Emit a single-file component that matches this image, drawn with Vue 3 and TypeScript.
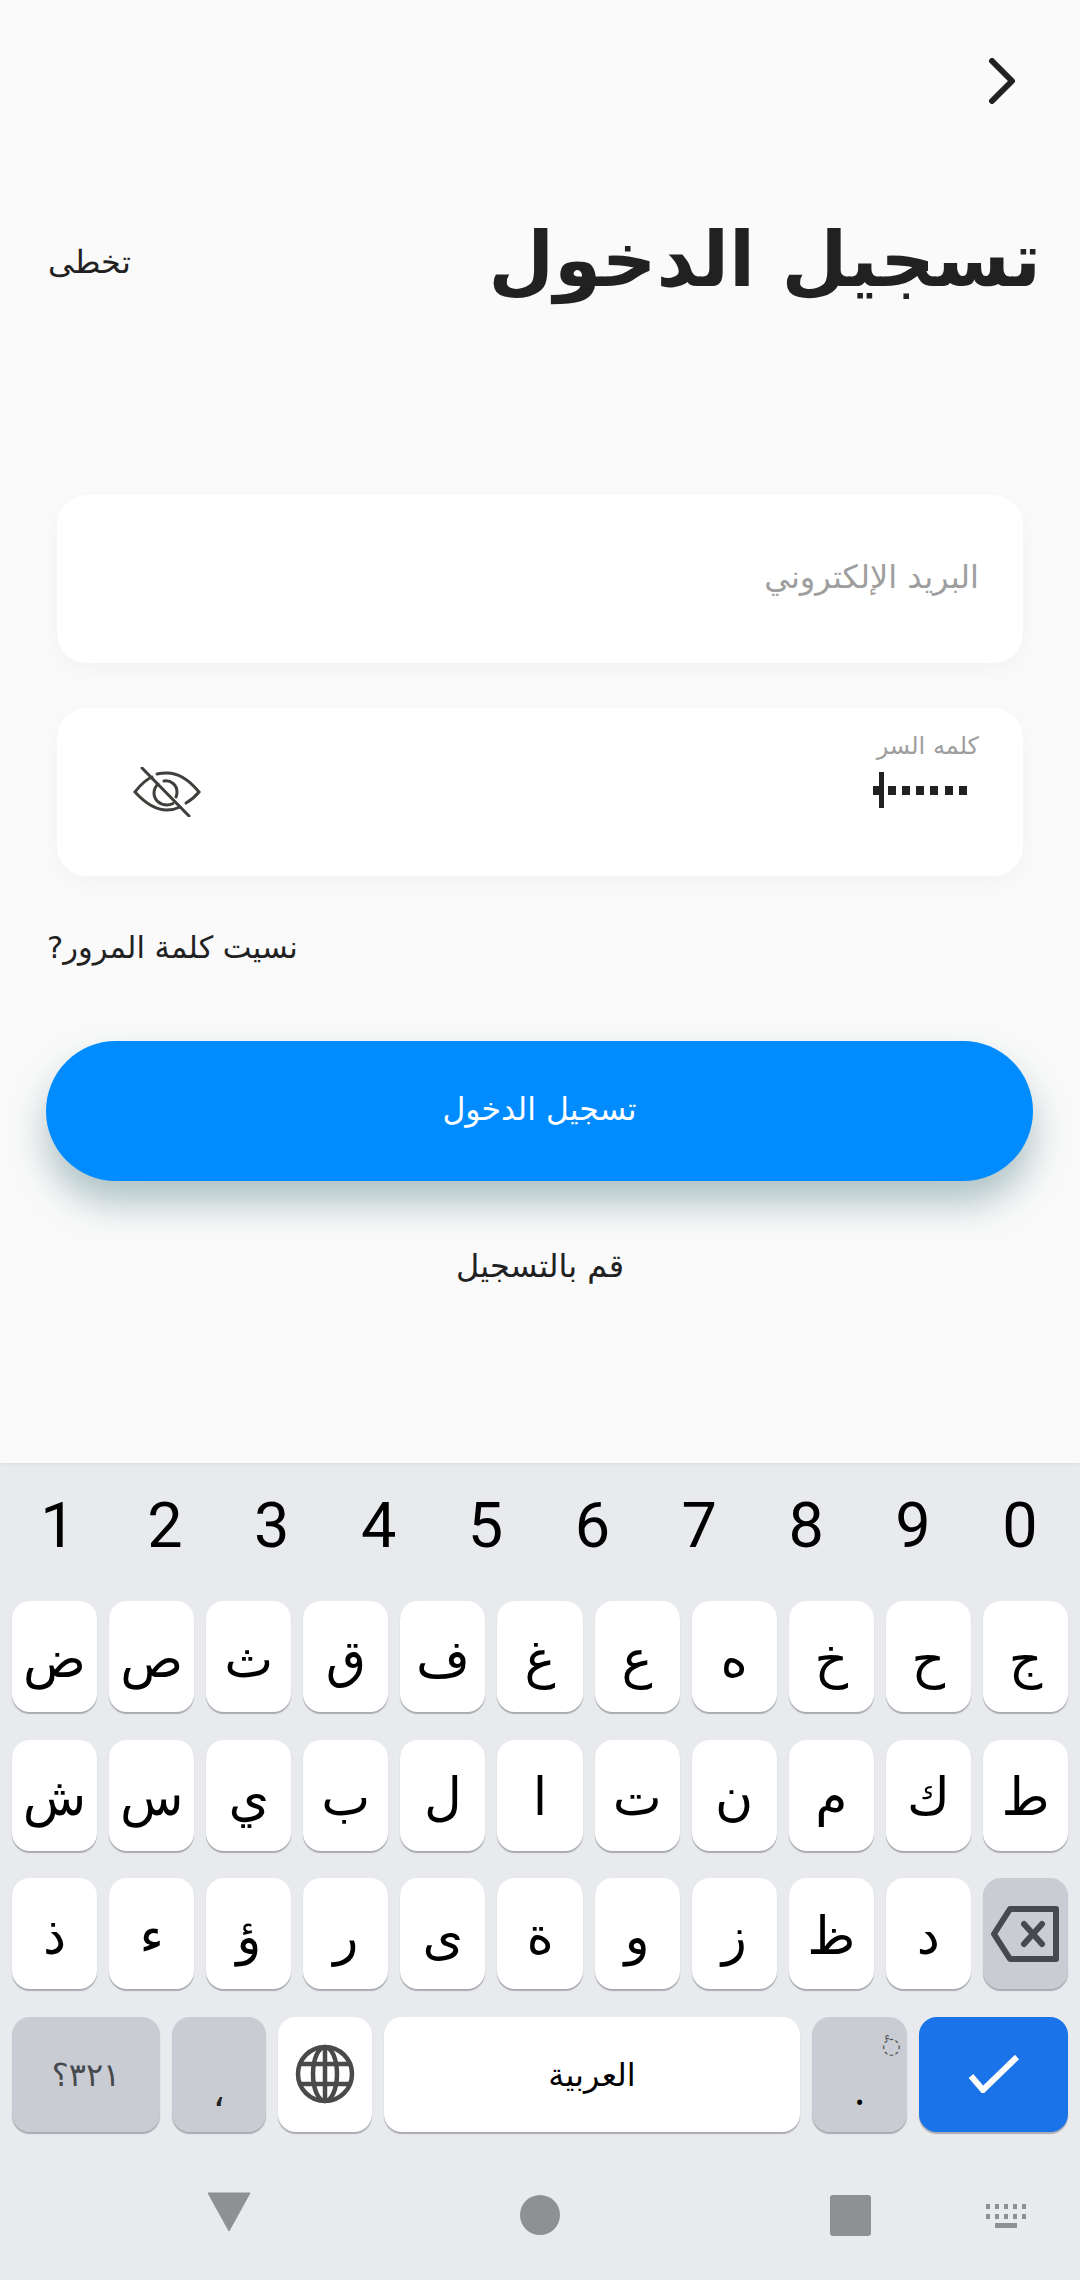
<script setup lang="ts">
const digits: string[] = ['1', '2', '3', '4', '5', '6', '7', '8', '9', '0']
const row1: string[] = ['ض', 'ص', 'ث', 'ق', 'ف', 'غ', 'ع', 'ه', 'خ', 'ح', 'ج']
const row2: string[] = ['ش', 'س', 'ي', 'ب', 'ل', 'ا', 'ت', 'ن', 'م', 'ك', 'ط']
const row3: string[] = ['ذ', 'ء', 'ؤ', 'ر', 'ى', 'ة', 'و', 'ز', 'ظ', 'د']
const dots: number[] = [1, 2, 3, 4, 5, 6, 7]
</script>

<template>
  <div class="screen">
    <main class="form">
      <div class="topbar">
        <svg class="chevron" width="28" height="46" viewBox="0 0 28 46" fill="none">
          <path d="M4 3 L24 23 L4 43" stroke="#212121" stroke-width="6" stroke-linecap="round" stroke-linejoin="round" />
        </svg>
      </div>
      <div class="heading">
        <span class="skip" dir="rtl">تخطى</span>
        <h1 class="title" dir="rtl">تسجيل الدخول</h1>
      </div>
      <div class="field" dir="rtl">
        <span class="placeholder">البريد الإلكتروني</span>
      </div>
      <div class="field password" dir="rtl">
        <div class="pw-text">
          <span class="pw-label">كلمه السر</span>
          <div class="pw-dots" dir="ltr">
            <span class="caret"></span>
            <span v-for="d in dots" :key="d" class="dot"></span>
          </div>
        </div>
        <svg class="eye" width="68" height="50" viewBox="0 0 68 50" fill="none" stroke="#3f3f3c" stroke-width="3" stroke-linecap="round">
          <path d="M19 10 C10 14 6 20 2 25 C12 36 22 43 34 43 C40 43 44 41.500 47 40" />
          <path d="M24 7 C28 6 31 6 34 6 C46 6 57 14 66 25 C62 30 58 33 53 36" />
          <path d="M25 17 C22 20 21 23 21 26 C21 33 27 38 34 38 C36 38 38 37.500 40 36.500" />
          <path d="M31 14 C38 13 44 18 44 25 C44 27 44 28 43 30" />
          <path d="M9 1 L56 49" />
        </svg>
      </div>
      <div class="forgot"><span dir="rtl">نسيت كلمة المرور?</span></div>
      <button class="submit" dir="rtl">تسجيل الدخول</button>
      <div class="register" dir="rtl">قم بالتسجيل</div>
    </main>

    <section class="keyboard">
      <div class="digits">
        <span v-for="d in digits" :key="d" class="digit">{{ d }}</span>
      </div>
      <div class="rows">
        <div class="row">
          <div v-for="k in row1" :key="k" class="key">{{ k }}</div>
        </div>
        <div class="row">
          <div v-for="k in row2" :key="k" class="key">{{ k }}</div>
        </div>
        <div class="row">
          <div v-for="k in row3" :key="k" class="key">{{ k }}</div>
          <div class="key fn">
            <svg width="68" height="56" viewBox="0 0 68 56" fill="none" stroke="#46494d" stroke-width="6" stroke-linejoin="round" stroke-linecap="round">
              <path d="M19 3 H65 V53 H19 L3 28 Z" />
              <path d="M33 18 L51 38 M51 18 L33 38" />
            </svg>
          </div>
        </div>
        <div class="row bottom">
          <div class="key fn k-sym"><bdo dir="rtl">١٢٣؟</bdo></div>
          <div class="key fn k-comma">،</div>
          <div class="key k-globe">
            <svg width="60" height="60" viewBox="0 0 60 60" fill="none" stroke="#4a4a4a" stroke-width="4.500">
              <circle cx="30" cy="30" r="27" />
              <ellipse cx="30" cy="30" rx="12" ry="27" />
              <path d="M30 3 V57 M5 20 H55 M5 40 H55" />
            </svg>
          </div>
          <div class="key k-space" dir="rtl">العربية</div>
          <div class="key fn k-period">
            <span class="mark">◌ٔ</span>
            <span class="period">.</span>
          </div>
          <div class="key k-enter">
            <svg width="52" height="38" viewBox="0 0 52 38" fill="none" stroke="#fff" stroke-width="6">
              <path d="M3 21 L15 35 L49 2" />
            </svg>
          </div>
        </div>
      </div>
      <div class="nav">
        <svg class="nav-back" width="44" height="40" viewBox="0 0 44 40">
          <path d="M1 1 H43 L22 39 Z" fill="#8f9092" stroke="#8f9092" stroke-linejoin="round" />
        </svg>
        <span class="nav-home"></span>
        <span class="nav-recent"></span>
        <svg class="nav-kbd" width="44" height="24" viewBox="0 0 44 24" fill="#8f9092">
          <path d="M1 0h4v5H1zM10 0h4v5h-4zM19 0h4v5h-4zM28 0h4v5h-4zM37 0h4v5h-4zM1 10h4v5H1zM10 10h4v5h-4zM19 10h4v5h-4zM28 10h4v5h-4zM37 10h4v5h-4zM10 19h22v5H10z" />
        </svg>
      </div>
    </section>
  </div>
</template>

<style>
html, body { margin: 0; padding: 0; }
</style>

<style scoped>
.screen {
  width: 1080px;
  height: 2280px;
  display: flex;
  flex-direction: column;
  overflow: hidden;
  background: #fafafa;
  font-family: "DejaVu Sans", "Noto Sans", sans-serif;
  color: #212121;
}
.form {
  height: 1463px;
  flex: none;
  box-shadow: 0 1px 4px rgba(0, 0, 0, 0.06);
  position: relative;
  z-index: 1;
}
.topbar {
  height: 220px;
  padding: 58px 64px 0 0;
  box-sizing: border-box;
  display: flex;
  justify-content: flex-end;
  align-items: flex-start;
}
.heading {
  height: 275px;
  display: flex;
  justify-content: space-between;
  align-items: flex-start;
  padding: 0 39px 0 48px;
  box-sizing: border-box;
}
.title {
  margin: 0;
  font-size: 76px;
  line-height: 80px;
  font-weight: 700;
  color: #212121;
}
.skip {
  font-size: 32px;
  line-height: 84px;
  font-weight: 300;
}
.field {
  width: 966px;
  height: 168px;
  margin: 0 0 45px 57px;
  background: #fff;
  border-radius: 30px;
  box-shadow: 0 6px 24px rgba(0, 0, 0, 0.035);
  display: flex;
  align-items: center;
  padding: 0 44px 4px;
  box-sizing: border-box;
}
.placeholder {
  font-size: 32px;
  color: #9e9e9e;
}
.password {
  justify-content: space-between;
  align-items: stretch;
  padding: 0 44px 0 76px;
}
.pw-text {
  display: flex;
  flex-direction: column;
  align-items: flex-start;
  padding-top: 22px;
}
.pw-label {
  font-size: 24px;
  line-height: 32px;
  color: #9e9e9e;
}
.pw-dots {
  position: relative;
  display: flex;
  gap: 6.300px;
  align-items: center;
  height: 36px;
  margin-top: 10px;
  margin-right: 12px;
}
.dot {
  width: 8px;
  height: 9px;
  background: #212121;
}
.caret {
  position: absolute;
  left: 6px;
  top: 0;
  width: 5px;
  height: 36px;
  background: #212121;
}
.eye {
  align-self: center;
}
.forgot {
  height: 120px;
  padding: 2px 0 0 47px;
  box-sizing: border-box;
  font-size: 30.500px;
  line-height: 50px;
  white-space: nowrap;
}
.submit {
  display: block;
  width: 987px;
  height: 140px;
  margin-left: 46px;
  border: none;
  border-radius: 70px;
  background: #008cff;
  color: #fff;
  font-family: inherit;
  font-size: 31.500px;
  padding-bottom: 6px;
  box-shadow: 0 22px 36px rgba(100, 140, 145, 0.5);
}
.register {
  margin-top: 60px;
  text-align: center;
  font-size: 32px;
  line-height: 50px;
}
.keyboard {
  flex: 1;
  background: #e8eaed;
  display: flex;
  flex-direction: column;
  font-family: "Noto Sans", "DejaVu Sans", sans-serif;
  color: #000;
}
.digits {
  height: 138px;
  display: flex;
  justify-content: space-between;
  padding: 0 33px 14px 31px;
  box-sizing: border-box;
  align-items: center;
  font-family: Roboto, sans-serif;
  font-size: 63px;
  font-weight: 400;
}
.digit {
  width: 54px;
  text-align: center;
}
.rows {
  display: flex;
  flex-direction: column;
  gap: 27.500px;
}
.row {
  display: flex;
  gap: 12px;
  padding: 0 12px;
  height: 111px;
}
.key {
  flex: 1 1 0;
  min-width: 0;
  background: #fff;
  border-radius: 18px;
  box-shadow: 0 2px 1px #a9abb0;
  display: flex;
  align-items: center;
  justify-content: center;
  font-size: 52px;
  line-height: 1;
  position: relative;
}
.fn {
  background: #c9ccd3;
}
.bottom {
  height: 115px;
}
.k-sym {
  flex: none;
  width: 148px;
  font-size: 32px;
  color: #46494d;
}
.k-comma {
  flex: none;
  width: 94px;
  font-size: 38px;
  color: #222;
  padding-top: 34px;
  box-sizing: border-box;
}
.k-globe {
  flex: none;
  width: 94px;
}
.k-space {
  flex: none;
  width: 416px;
  font-size: 32px;
}
.k-period {
  flex: none;
  width: 95px;
}
.period {
  font-size: 40px;
  padding-top: 32px;
}
.mark {
  position: absolute;
  top: 16px;
  right: 6px;
  font-size: 22px;
  color: #555;
}
.k-enter {
  flex: none;
  width: 149px;
  background: #1a73e8;
}
.nav {
  flex: 1;
  position: relative;
  display: flex;
  align-items: flex-start;
  padding: 60px 0 0 207px;
  box-sizing: border-box;
}
.nav-home {
  width: 40px;
  height: 40px;
  border-radius: 50%;
  background: #8f9092;
  margin: 3px 0 0 269px;
}
.nav-recent {
  width: 41px;
  height: 41px;
  border-radius: 3px;
  background: #8f9092;
  margin: 3px 0 0 270px;
}
.nav-kbd {
  margin: 12px 0 0 114px;
}
</style>
